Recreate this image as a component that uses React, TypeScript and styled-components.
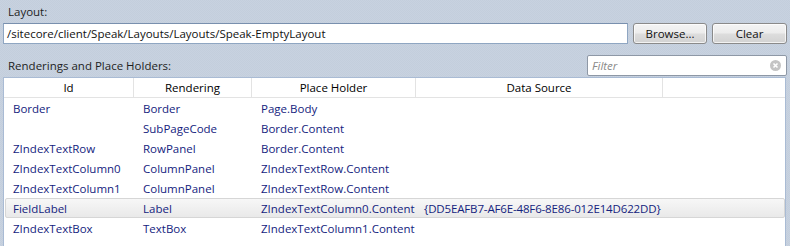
import React from 'react';
import styled, { createGlobalStyle } from 'styled-components';

const GlobalStyle = createGlobalStyle`
  html, body {
    margin: 0;
    padding: 0;
    background: #c5d0de;
  }
  body {
    font-family: "Open Sans", "Noto Sans", sans-serif;
    font-size: 11.5px;
  }
`;

const Panel = styled.div`
  width: 790px;
  height: 246px;
  box-sizing: border-box;
  padding: 3px 3px 0 3px;
  display: flex;
  flex-direction: column;
  overflow: hidden;
  background-color: #c5d0de;
  background-image: repeating-conic-gradient(#c8d2e0 0% 25%, #c3cedc 0% 50%);
  background-size: 2px 2px;
`;

const Label = styled.div`
  height: 20px;
  line-height: 18px;
  padding-left: 5px;
  color: #1e1e1e;
`;

const PathRow = styled.div`
  display: flex;
  gap: 5px;
  height: 21px;
`;

const TextInput = styled.div`
  flex: 1;
  box-sizing: border-box;
  background: #ffffff;
  border: 1px solid #8fa6c2;
  border-top-color: #7990ae;
  padding: 0 3px;
  line-height: 19px;
  color: #111111;
  white-space: nowrap;
`;

const Button = styled.button<{ $w: number }>`
  width: ${(p) => p.$w}px;
  height: 21px;
  box-sizing: border-box;
  padding: 0;
  margin: 0;
  font: inherit;
  color: #111111;
  border: 1px solid #8a8a8a;
  border-radius: 3px;
  background: linear-gradient(#f4f4f4 0%, #ececec 48%, #dddddd 52%, #d2d2d2 100%);
  box-shadow: inset 0 0 0 1px rgba(255, 255, 255, 0.7);
`;

const SectionRow = styled.div`
  display: flex;
  align-items: center;
  justify-content: space-between;
  margin-top: 11px;
  height: 21px;
`;

const SectionLabel = styled.div`
  padding-left: 5px;
  color: #1e1e1e;
`;

const FilterBox = styled.div`
  position: relative;
  width: 200px;
  height: 21px;
  box-sizing: border-box;
  background: #ffffff;
  border: 1px solid #8e98a6;
  border-radius: 2px;
  display: flex;
  align-items: center;
  padding: 0 4px;
  color: #8a8a8a;
  font-style: italic;
`;

const ClearIcon = styled.span`
  position: absolute;
  right: 5px;
  top: 4px;
  width: 11px;
  height: 11px;
  display: flex;
`;

const ListBox = styled.div`
  flex: 1;
  margin-top: 1px;
  background: #ffffff;
  border: 1px solid #a9bbd4;
  border-bottom: none;
  margin-right: 1px;
`;

const Grid = styled.div`
  display: grid;
  grid-template-columns: 130px 118px 164px 247px 1fr;
`;

const HeadCell = styled.div<{ $last?: boolean }>`
  height: 20px;
  box-sizing: border-box;
  line-height: 19px;
  text-align: center;
  color: #000000;
  border-bottom: 1px solid #e3e3e3;
  border-right: ${(p) => (p.$last ? 'none' : '1px solid #e3e3e3')};
`;

const Row = styled.div<{ $selected?: boolean }>`
  grid-column: 1 / -1;
  display: grid;
  grid-template-columns: 130px 118px 164px 247px 1fr;
  height: 20px;
  box-sizing: border-box;
  line-height: 19px;
  color: #14237e;
  border: 1px solid ${(p) => (p.$selected ? '#d6d6d6' : 'transparent')};
  border-radius: 2px;
  margin: 0 0 0 1px;
  background: ${(p) => (p.$selected ? 'linear-gradient(#f7f7f7, #e9e9e9)' : 'transparent')};
`;

const Cell = styled.div`
  padding-left: 7px;
  white-space: nowrap;
`;

const GuidCell = styled(Cell)`
  padding-left: 6px;
  letter-spacing: -0.15px;
`;

type Rendering = {
  id: string;
  rendering: string;
  placeholder: string;
  dataSource?: string;
  selected?: boolean;
};

const rows: Rendering[] = [
  { id: 'Border', rendering: 'Border', placeholder: 'Page.Body' },
  { id: '', rendering: 'SubPageCode', placeholder: 'Border.Content' },
  { id: 'ZIndexTextRow', rendering: 'RowPanel', placeholder: 'Border.Content' },
  { id: 'ZIndexTextColumn0', rendering: 'ColumnPanel', placeholder: 'ZIndexTextRow.Content' },
  { id: 'ZIndexTextColumn1', rendering: 'ColumnPanel', placeholder: 'ZIndexTextRow.Content' },
  {
    id: 'FieldLabel',
    rendering: 'Label',
    placeholder: 'ZIndexTextColumn0.Content',
    dataSource: '{DD5EAFB7-AF6E-48F6-8E86-012E14D622DD}',
    selected: true,
  },
  { id: 'ZIndexTextBox', rendering: 'TextBox', placeholder: 'ZIndexTextColumn1.Content' },
];

export default function App() {
  return (
    <>
      <GlobalStyle />
      <Panel>
        <Label>Layout:</Label>
        <PathRow>
          <TextInput>/sitecore/client/Speak/Layouts/Layouts/Speak-EmptyLayout</TextInput>
          <Button $w={74}>Browse...</Button>
          <Button $w={75}>Clear</Button>
        </PathRow>
        <SectionRow>
          <SectionLabel>Renderings and Place Holders:</SectionLabel>
          <FilterBox>
            Filter
            <ClearIcon>
              <svg width="11" height="11" viewBox="0 0 11 11">
                <circle cx="5.5" cy="5.5" r="5.5" fill="#c4c4c4" />
                <path d="M3.5 3.5 L7.5 7.5 M7.5 3.5 L3.5 7.5" stroke="#ffffff" strokeWidth="1.6" />
              </svg>
            </ClearIcon>
          </FilterBox>
        </SectionRow>
        <ListBox>
          <Grid>
            <HeadCell>Id</HeadCell>
            <HeadCell>Rendering</HeadCell>
            <HeadCell>Place Holder</HeadCell>
            <HeadCell>Data Source</HeadCell>
            <HeadCell $last />
            {rows.map((r, i) => (
              <Row key={i} $selected={r.selected}>
                <Cell>{r.id}</Cell>
                <Cell>{r.rendering}</Cell>
                <Cell>{r.placeholder}</Cell>
                <GuidCell>{r.dataSource}</GuidCell>
                <Cell />
              </Row>
            ))}
          </Grid>
        </ListBox>
      </Panel>
    </>
  );
}
